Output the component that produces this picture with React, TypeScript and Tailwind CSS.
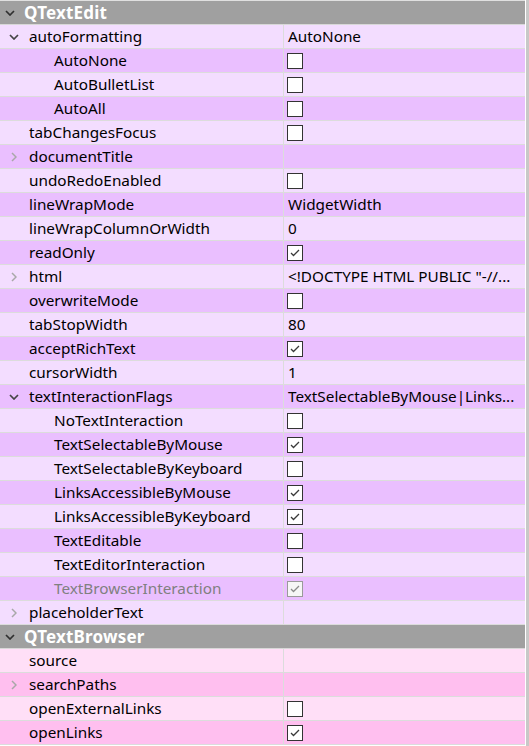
import React from 'react';

type Row =
  | { kind: 'group'; label: string }
  | {
      kind: 'prop';
      label: string;
      level: 0 | 1;
      arrow?: 'open' | 'closed';
      value?: string;
      check?: boolean;
      disabled?: boolean;
      dark: boolean;
      pink?: boolean;
    };

const rows: Row[] = [
  { kind: 'group', label: 'QTextEdit' },
  { kind: 'prop', label: 'autoFormatting', level: 0, arrow: 'open', value: 'AutoNone', dark: false },
  { kind: 'prop', label: 'AutoNone', level: 1, check: false, dark: true },
  { kind: 'prop', label: 'AutoBulletList', level: 1, check: false, dark: false },
  { kind: 'prop', label: 'AutoAll', level: 1, check: false, dark: true },
  { kind: 'prop', label: 'tabChangesFocus', level: 0, check: false, dark: false },
  { kind: 'prop', label: 'documentTitle', level: 0, arrow: 'closed', dark: true },
  { kind: 'prop', label: 'undoRedoEnabled', level: 0, check: false, dark: false },
  { kind: 'prop', label: 'lineWrapMode', level: 0, value: 'WidgetWidth', dark: true },
  { kind: 'prop', label: 'lineWrapColumnOrWidth', level: 0, value: '0', dark: false },
  { kind: 'prop', label: 'readOnly', level: 0, check: true, dark: true },
  { kind: 'prop', label: 'html', level: 0, arrow: 'closed', value: '<!DOCTYPE HTML PUBLIC "-//...', dark: false },
  { kind: 'prop', label: 'overwriteMode', level: 0, check: false, dark: true },
  { kind: 'prop', label: 'tabStopWidth', level: 0, value: '80', dark: false },
  { kind: 'prop', label: 'acceptRichText', level: 0, check: true, dark: true },
  { kind: 'prop', label: 'cursorWidth', level: 0, value: '1', dark: false },
  { kind: 'prop', label: 'textInteractionFlags', level: 0, arrow: 'open', value: 'TextSelectableByMouse|Links...', dark: true },
  { kind: 'prop', label: 'NoTextInteraction', level: 1, check: false, dark: false },
  { kind: 'prop', label: 'TextSelectableByMouse', level: 1, check: true, dark: true },
  { kind: 'prop', label: 'TextSelectableByKeyboard', level: 1, check: false, dark: false },
  { kind: 'prop', label: 'LinksAccessibleByMouse', level: 1, check: true, dark: true },
  { kind: 'prop', label: 'LinksAccessibleByKeyboard', level: 1, check: true, dark: false },
  { kind: 'prop', label: 'TextEditable', level: 1, check: false, dark: true },
  { kind: 'prop', label: 'TextEditorInteraction', level: 1, check: false, dark: false },
  { kind: 'prop', label: 'TextBrowserInteraction', level: 1, check: true, disabled: true, dark: true },
  { kind: 'prop', label: 'placeholderText', level: 0, arrow: 'closed', dark: false },
  { kind: 'group', label: 'QTextBrowser' },
  { kind: 'prop', label: 'source', level: 0, dark: false, pink: true },
  { kind: 'prop', label: 'searchPaths', level: 0, arrow: 'closed', dark: true, pink: true },
  { kind: 'prop', label: 'openExternalLinks', level: 0, check: false, dark: false, pink: true },
  { kind: 'prop', label: 'openLinks', level: 0, check: true, dark: true, pink: true },
];

const ChevronDown = ({ className }: { className: string }) => (
  <svg width="10" height="6" viewBox="0 0 10 6" className={className}>
    <polyline points="1,1 5,5 9,1" fill="none" stroke="currentColor" strokeWidth="1.7" />
  </svg>
);

const ChevronRight = () => (
  <svg width="6" height="10" viewBox="0 0 6 10" className="text-[#a8a8a8]">
    <polyline points="1,1 5,5 1,9" fill="none" stroke="currentColor" strokeWidth="1.5" />
  </svg>
);

const CheckBox = ({ checked, disabled }: { checked: boolean; disabled?: boolean }) => (
  <div
    className={
      disabled
        ? 'w-[16px] h-[16px] border border-[#9a9a9a] bg-[#f6f6f6] flex items-center justify-center'
        : 'w-[16px] h-[16px] border border-[#333333] bg-white flex items-center justify-center'
    }
  >
    {checked && (
      <svg width="12" height="10" viewBox="0 0 12 10">
        <polyline
          points="2,5 4.5,7.5 10,2"
          fill="none"
          stroke={disabled ? '#8a8a8a' : '#3a3a3a'}
          strokeWidth="1.3"
        />
      </svg>
    )}
  </div>
);

const App: React.FC = () => {
  return (
    <div
      className="w-[529px] h-[746px] flex bg-white text-[15.3px] text-black overflow-hidden"
      style={{ fontFamily: '"Noto Sans", "Open Sans", sans-serif' }}
    >
      <div className="w-[525px] flex flex-col border-t border-[#e0e0e0]">
        {rows.map((row, i) => {
          if (row.kind === 'group') {
            return (
              <div key={i} className="h-[24px] flex items-center bg-[#a0a0a0] border-b border-[#d8d8d8]">
                <div className="w-[24px] pl-[5px] flex items-center">
                  <ChevronDown className="text-[#303030]" />
                </div>
                <span className="font-bold text-[17px] tracking-[0.2px] text-white leading-none">{row.label}</span>
              </div>
            );
          }
          const bg = row.pink
            ? row.dark
              ? 'bg-[#ffbfef]'
              : 'bg-[#ffdff7]'
            : row.dark
              ? 'bg-[#eabfff]'
              : 'bg-[#f3ddff]';
          return (
            <div key={i} className={`h-[24px] flex border-b border-[#dcdcdc] ${bg}`}>
              <div className="w-[284px] flex items-center border-r border-[#dcdcdc] shrink-0">
                <div className="w-[29px] shrink-0 flex items-center justify-center pr-[2px]">
                  {row.arrow === 'open' && <ChevronDown className="text-[#444444]" />}
                  {row.arrow === 'closed' && <ChevronRight />}
                </div>
                <span
                  className={`leading-none whitespace-nowrap ${row.level === 1 ? 'pl-[25px]' : ''} ${
                    row.disabled ? 'text-[#808080]' : ''
                  }`}
                >
                  {row.label}
                </span>
              </div>
              <div className="flex-1 flex items-center pl-[3px] overflow-hidden">
                {row.check !== undefined ? (
                  <CheckBox checked={row.check} disabled={row.disabled} />
                ) : (
                  <span className="pl-[1px] leading-none whitespace-nowrap">{row.value}</span>
                )}
              </div>
            </div>
          );
        })}
      </div>
      <div className="w-[1px] bg-white" />
      <div className="w-[3px] bg-[#c8c8c8]" />
    </div>
  );
};

export default App;
